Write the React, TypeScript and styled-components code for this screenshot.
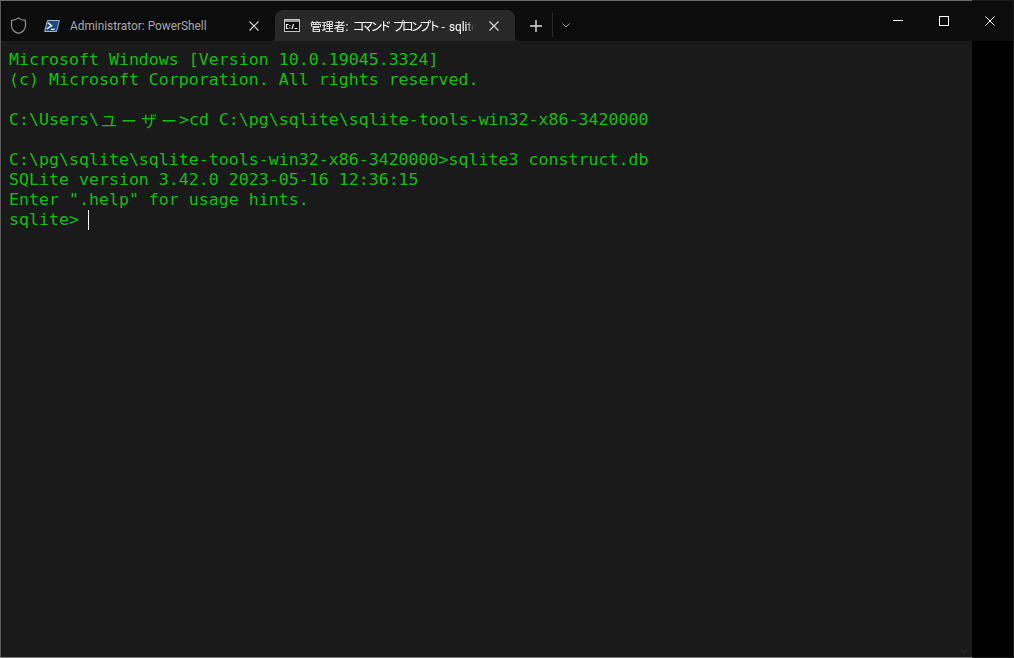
import React from "react";
import styled, { createGlobalStyle } from "styled-components";

const GlobalStyle = createGlobalStyle`
  html, body {
    margin: 0;
    padding: 0;
    background: #0c0c0c;
  }
`;

const Window = styled.div`
  width: 1014px;
  height: 658px;
  box-sizing: border-box;
  display: flex;
  flex-direction: column;
  background: #0c0c0c;
  overflow: hidden;
`;

// the frame is only lit above and below the terminal area
const Edge = styled.div<{ $color: string }>`
  height: 1px;
  flex: none;
  background: linear-gradient(to right, ${(p) => p.$color} 972px, #1c1c1c 972px);
`;

const Middle = styled.div`
  flex: 1;
  min-height: 0;
  display: flex;
  flex-direction: column;
  border-left: 1px solid #5a5a5a;
  border-right: 1px solid #1c1c1c;
`;

const TitleBar = styled.div`
  height: 40px;
  flex: none;
  display: flex;
  align-items: flex-end;
  background: #0c0c0c;
  font-family: Roboto, "Noto Sans CJK JP", sans-serif;
  font-size: 11.85px;
`;

const ShieldSlot = styled.div`
  width: 34px;
  height: 31px;
  display: flex;
  align-items: center;
  justify-content: center;
  flex: none;
`;

const Tab = styled.div<{ $active?: boolean }>`
  position: relative;
  width: 240px;
  height: 31px;
  box-sizing: border-box;
  flex: none;
  display: flex;
  align-items: center;
  padding-left: 9px;
  border-radius: 8px 8px 0 0;
  background: ${(p) => (p.$active ? "#282828" : "transparent")};
  color: ${(p) => (p.$active ? "#ffffff" : "#a8a8a8")};
`;

const TabFlare = styled.span<{ $side: "left" | "right" }>`
  position: absolute;
  bottom: 0;
  width: 4px;
  height: 4px;
  ${(p) => (p.$side === "left" ? "left: -4px;" : "right: -4px;")}
  background: radial-gradient(
    circle at ${(p) => (p.$side === "left" ? "0 0" : "100% 0")},
    transparent 4px,
    #282828 4.5px
  );
`;

const TabTitle = styled.span<{ $fade?: boolean }>`
  margin-left: 10px;
  width: 164px;
  flex: none;
  white-space: nowrap;
  overflow: hidden;
  ${(p) =>
    p.$fade &&
    "word-spacing: 1.2px; mask-image: linear-gradient(to right, #000 156px, transparent 164px);"}
`;

const Kana = styled.span`
  font-size: 12px;
  letter-spacing: -3px;
`;

const TabClose = styled.span`
  margin-left: 15px;
  display: flex;
  flex: none;
`;

const NewTab = styled.div`
  width: 33px;
  height: 31px;
  margin-left: 4px;
  display: flex;
  align-items: center;
  justify-content: center;
  flex: none;
`;

const Divider = styled.div`
  width: 1px;
  height: 24px;
  background: #2b2b2b;
  align-self: center;
  margin-top: 8px;
  flex: none;
`;

const Dropdown = styled.div`
  width: 25px;
  height: 31px;
  display: flex;
  align-items: center;
  justify-content: center;
  flex: none;
`;

const Caption = styled.div`
  margin-left: auto;
  height: 40px;
  display: flex;
`;

const CaptionButton = styled.div`
  width: 46px;
  height: 40px;
  display: flex;
  align-items: center;
  justify-content: center;
`;

const MinimizeGlyph = styled.span`
  display: block;
  width: 10px;
  height: 1px;
  margin-bottom: 2px;
  background: #ffffff;
`;

const MaximizeGlyph = styled.span`
  display: block;
  width: 10px;
  height: 10px;
  box-sizing: border-box;
  border: 1px solid #ffffff;
`;

const Body = styled.div`
  flex: 1;
  display: flex;
  min-height: 0;
`;

const Terminal = styled.div`
  position: relative;
  flex: 1;
  padding: 9px 0 0 8px;
  background: #1a1a1a;
  color: #10c010;
  font-family: "DejaVu Sans Mono", "Noto Sans CJK JP", monospace;
  font-size: 16.6px;
  line-height: 20px;
`;

const Line = styled.div`
  height: 20px;
  display: flex;
  white-space: pre;
`;

const Wide = styled.span`
  display: inline-block;
  width: 20px;
  text-align: center;
  font-family: "Noto Sans CJK JP", monospace;
  font-size: 16px;
`;

const Cursor = styled.span`
  display: inline-block;
  width: 1px;
  height: 20px;
  margin-left: 9px;
  background: #ffffff;
`;

const ScrollHint = styled.svg`
  position: absolute;
  right: 4px;
  bottom: 3px;
`;

const Gutter = styled.div`
  width: 41px;
  flex: none;
  background: #000000;
`;

const ShieldIcon = () => (
  <svg width="19" height="19" viewBox="0 0 18 18" fill="none">
    <path
      d="M9 1.800c2 1.500 4 2.200 6.600 2.400v5c0 3.400-2.300 5.900-6.600 7.300C4.700 15.100 2.400 12.600 2.400 9.200v-5C5 4 7 3.300 9 1.800z"
      stroke="#8a8a8a"
      strokeWidth="1.200"
    />
  </svg>
);

const PowerShellIcon = () => (
  <svg width="16" height="12" viewBox="0 0 16 12">
    <path d="M3.400 0.500h12l-2.800 11H0.600z" fill="#1f4a80" stroke="#9db4cf" strokeWidth="1" />
    <path d="M3.800 2.800l3.800 3-5 3.200" stroke="#ffffff" strokeWidth="1.400" fill="none" />
    <path d="M7 9.300h4" stroke="#ffffff" strokeWidth="1.200" />
  </svg>
);

const CmdIcon = () => (
  <svg width="16" height="13" viewBox="0 0 16 13">
    <rect x="0.500" y="0.500" width="15" height="12" fill="#0c0c0c" stroke="#c4c4c4" />
    <rect x="1" y="1" width="14" height="2" fill="#9a9a9a" />
    <path
      d="M4.500 5.500H2.500v4.000h2M6 6v1M6 8.500v1M9.500 5L8 10M10.500 9.500h3"
      stroke="#ffffff"
      strokeWidth="1.100"
      fill="none"
    />
  </svg>
);

const CrossIcon = ({ size, color, weight = 1 }: { size: number; color: string; weight?: number }) => (
  <svg width={size} height={size} viewBox="0 0 10 10">
    <path d="M0.500 0.500l9 9M9.500 0.500l-9 9" stroke={color} strokeWidth={weight} />
  </svg>
);

const App: React.FC = () => (
  <>
    <GlobalStyle />
    <Window>
      <Edge $color="#6a6a6a" />
      <Middle>
        <TitleBar>
          <ShieldSlot>
            <ShieldIcon />
          </ShieldSlot>
          <Tab>
            <PowerShellIcon />
            <TabTitle>Administrator: PowerShell</TabTitle>
            <TabClose>
              <CrossIcon size={10} color="#d8d8d8" weight={1.2} />
            </TabClose>
          </Tab>
          <Tab $active>
            <TabFlare $side="left" />
            <CmdIcon />
            <TabTitle $fade>
              管理者: <Kana>コマンド</Kana> <Kana>プロンプト</Kana> - sqlite3 construct.db
            </TabTitle>
            <TabClose>
              <CrossIcon size={10} color="#d8d8d8" weight={1.2} />
            </TabClose>
            <TabFlare $side="right" />
          </Tab>
          <NewTab>
            <svg width="12" height="12" viewBox="0 0 12 12">
              <path d="M6 0v12M0 6h12" stroke="#e0e0e0" strokeWidth="1.400" />
            </svg>
          </NewTab>
          <Divider />
          <Dropdown>
            <svg width="8" height="5" viewBox="0 0 8 5" fill="none">
              <path d="M0.500 0.500L4 4l3.500-3.500" stroke="#a0a0a0" />
            </svg>
          </Dropdown>
          <Caption>
            <CaptionButton>
              <MinimizeGlyph />
            </CaptionButton>
            <CaptionButton>
              <MaximizeGlyph />
            </CaptionButton>
            <CaptionButton>
              <CrossIcon size={10} color="#ffffff" />
            </CaptionButton>
          </Caption>
        </TitleBar>
        <Body>
          <Terminal>
            <Line>Microsoft Windows [Version 10.0.19045.3324]</Line>
            <Line>(c) Microsoft Corporation. All rights reserved.</Line>
            <Line> </Line>
            <Line>
              C:\Users\<Wide>ユ</Wide><Wide>ー</Wide><Wide>ザ</Wide><Wide>ー</Wide>&gt;cd C:\pg\sqlite\sqlite-tools-win32-x86-3420000
            </Line>
            <Line> </Line>
            <Line>C:\pg\sqlite\sqlite-tools-win32-x86-3420000&gt;sqlite3 construct.db</Line>
            <Line>SQLite version 3.42.0 2023-05-16 12:36:15</Line>
            <Line>Enter ".help" for usage hints.</Line>
            <Line>
              sqlite&gt;<Cursor />
            </Line>
            <ScrollHint width="8" height="5" viewBox="0 0 8 5" fill="none">
              <path d="M0.500 0.500L4 4l3.500-3.500" stroke="#262626" strokeWidth="1.500" />
            </ScrollHint>
          </Terminal>
          <Gutter />
        </Body>
      </Middle>
      <Edge $color="#7a7a7a" />
    </Window>
  </>
);

export default App;
